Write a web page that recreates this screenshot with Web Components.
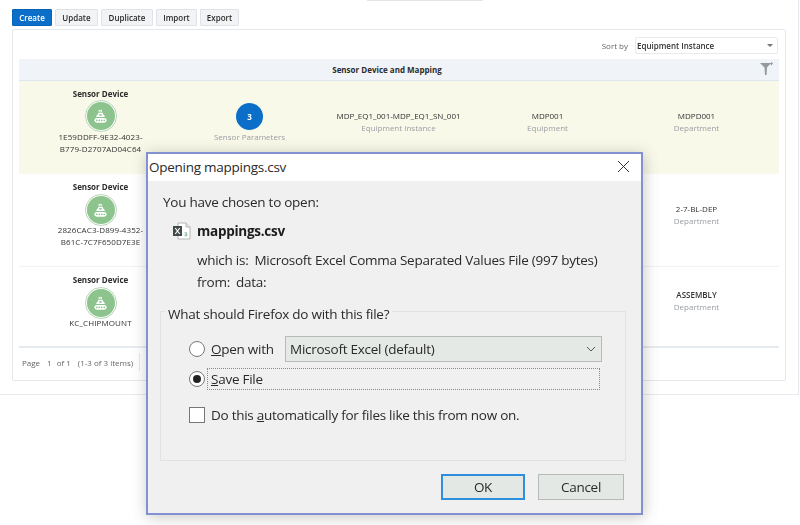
<!DOCTYPE html>
<html>
<head>
<meta charset="utf-8">
<title>Sensor Device and Mapping</title>
<style>
  html, body { margin: 0; background: #fff; }
  body { width: 800px; height: 525px; overflow: hidden; position: relative; font-family: "Open Sans", "Liberation Sans", sans-serif; }
</style>
</head>
<body>
<page-shell>
  <tool-bar>
    <tool-button primary style="width:40px">Create</tool-button>
    <tool-button style="width:43px">Update</tool-button>
    <tool-button style="width:52px">Duplicate</tool-button>
    <tool-button style="width:41px">Import</tool-button>
    <tool-button style="width:39px">Export</tool-button>
  </tool-bar>
  <list-panel>
    <sensor-row selected style="height:93px;padding-top:8px">
      <device-cell>1E59DDFF-9E32-4023-<br>B779-D2707AD04C64</device-cell>
      <count-cell count="3" label="Sensor Parameters"></count-cell>
      <info-cell label="Equipment Instance">MDP_EQ1_001-MDP_EQ1_SN_001</info-cell>
      <info-cell label="Equipment">MDP001</info-cell>
      <info-cell label="Department">MDPD001</info-cell>
    </sensor-row>
    <sensor-row style="height:92px;padding-top:7px;border-bottom:1px solid #f0f2f4;--ring-top:2px;--ring-bottom:-2px">
      <device-cell>2826CAC3-D899-4352-<br>B61C-7C7F650D7E3E</device-cell>
      <info-cell style="grid-column:5" label="Department">2-7-BL-DEP</info-cell>
    </sensor-row>
    <sensor-row style="height:81px;padding-top:8px;border-bottom:2px solid #e6ebf0;--ring-top:2px;--ring-bottom:-2px;--info-top:14px">
      <device-cell>KC_CHIPMOUNT</device-cell>
      <info-cell style="grid-column:5;font-weight:600" label="Department">ASSEMBLY</info-cell>
    </sensor-row>
    <pager-bar></pager-bar>
  </list-panel>
</page-shell>

<download-dialog file="mappings.csv"></download-dialog>

<script>
const bgFont = '"Open Sans", "Liberation Sans", sans-serif';
const dlgFont = '"Open Sans", "Noto Sans", "Liberation Sans", sans-serif';

class PageShell extends HTMLElement {
  constructor() {
    super();
    this.attachShadow({ mode: 'open' }).innerHTML = `
      <style>
        :host { display: block; width: 799px; height: 395px; box-sizing: border-box; border-right: 1px solid #e6e9ee; border-bottom: 1px solid #e6e9ee; font-family: ${bgFont}; filter: blur(.3px); }
        .strip { height: 1px; width: 116px; margin-left: 367px; background: #e4e4e4; }
        .inner { padding: 8px 0 0 12px; }
      </style>
      <div class="strip"></div>
      <div class="inner"><slot></slot></div>`;
  }
}

class ToolBar extends HTMLElement {
  constructor() {
    super();
    this.attachShadow({ mode: 'open' }).innerHTML = `
      <style>:host { display: flex; gap: 3px; height: 17px; margin-bottom: 3px; }</style>
      <slot></slot>`;
  }
}

class ToolButton extends HTMLElement {
  constructor() {
    super();
    this.attachShadow({ mode: 'open' }).innerHTML = `
      <style>
        :host { display: flex; align-items: center; justify-content: center; box-sizing: border-box; height: 17px; font-size: 8px; font-weight: 600; color: #2c2c2c; background: #f1f3f5; border: 1px solid #dfe3e7; border-radius: 1px; }
        :host([primary]) { background: #0b6fc9; border-color: #0a64b5; color: #fff; }
      </style>
      <slot></slot>`;
  }
}

class ListPanel extends HTMLElement {
  constructor() {
    super();
    this.attachShadow({ mode: 'open' }).innerHTML = `
      <style>
        :host { display: block; box-sizing: border-box; width: 774px; height: 352px; padding: 7px 6px 0; border: 1px solid #e4e8ec; border-radius: 2px; background: #fff; }
        .sort { display: flex; justify-content: flex-end; align-items: center; gap: 7px; height: 17px; margin: 0 1px 5px 0; font-size: 8px; color: #666; }
        .select { display: flex; align-items: center; justify-content: space-between; box-sizing: border-box; width: 143px; height: 17px; padding: 0 4px 0 1px; border: 1px solid #e8ebee; border-radius: 2px; color: #333; font-weight: 600; }
        .caret { width: 0; height: 0; border: 3px solid transparent; border-top: 3px solid #777; border-bottom: 0; }
        .head { position: relative; display: flex; align-items: center; justify-content: center; height: 22px; padding-right: 24px; background: #f0f4f8; border-bottom: 1px solid #dce6ec; box-sizing: border-box; font-size: 8px; font-weight: 700; color: #2c2c2c; }
        .head svg { position: absolute; right: 5px; top: 2px; }
      </style>
      <div class="sort">Sort by <div class="select">Equipment Instance<span class="caret"></span></div></div>
      <div class="head">Sensor Device and Mapping
        <svg width="15" height="15" viewBox="0 0 15 15"><path d="M1 2h11L8 6.5 7.6 14H6L5.5 6.5z" fill="#94999d"/><path d="M12.5 1.2v3M11 2.7h3" stroke="#94999d" stroke-width="1"/></svg>
      </div>
      <slot></slot>`;
  }
}

class SensorRow extends HTMLElement {
  constructor() {
    super();
    this.attachShadow({ mode: 'open' }).innerHTML = `
      <style>
        :host { display: grid; grid-template-columns: repeat(5, 149px); padding: 0 7px; box-sizing: border-box; align-items: stretch; font-size: 8px; }
        :host([selected]) { background: #f9f9ea; margin-bottom: 1px; }
      </style>
      <slot></slot>`;
  }
}

class DeviceCell extends HTMLElement {
  constructor() {
    super();
    this.attachShadow({ mode: 'open' }).innerHTML = `
      <style>
        :host { display: flex; flex-direction: column; align-items: center; text-align: center; color: #333; line-height: 12px; }
        .t { font-weight: 700; color: #2c2c2c; height: 10px; line-height: 10px; }
        .ring { flex: none; width: 32px; height: 32px; margin: var(--ring-top, 1px) 0 var(--ring-bottom, -1px); box-sizing: border-box; border: 1px solid #b9d4b9; border-radius: 50%; padding: 1px; background: #fff; }
        .disc { display: flex; align-items: center; justify-content: center; height: 100%; border-radius: 50%; background: #8dc48e; }
        .id { letter-spacing: .1px; }
      </style>
      <div class="t">Sensor Device</div>
      <div class="ring"><div class="disc">
        <svg width="15" height="15" viewBox="0 0 16 16">
          <path d="M7.2 1v2M5.5 2h4l-1.2-1.1M9.5 2l-1.2 1.1" stroke="#fff" stroke-width=".9" fill="none"/>
          <path d="M5.5 4h5v1.6c1.2.4 1.9 1.4 2.1 3H3.4c.2-1.6.9-2.6 2.1-3z" fill="#fff"/>
          <rect x="6.8" y="5.4" width="2.4" height="1.8" fill="#8dc48e"/>
          <rect x="1.5" y="9.6" width="13" height="5" rx="2.5" fill="#fff"/>
          <g fill="#8dc48e"><circle cx="4" cy="12.1" r=".9"/><circle cx="6.7" cy="12.1" r=".9"/><circle cx="9.3" cy="12.1" r=".9"/><circle cx="12" cy="12.1" r=".9"/></g>
        </svg>
      </div></div>
      <div class="id"><slot></slot></div>`;
  }
}

class CountCell extends HTMLElement {
  constructor() {
    super();
    this.attachShadow({ mode: 'open' }).innerHTML = `
      <style>
        :host { display: flex; flex-direction: column; align-items: center; padding-top: 14px; color: #9a9ea2; }
        .n { display: flex; align-items: center; justify-content: center; width: 27px; height: 27px; margin-bottom: 1px; border-radius: 50%; background: #0b6fc9; color: #fff; font-weight: 700; }
      </style>
      <div class="n">${this.getAttribute('count')}</div>
      <div>${this.getAttribute('label')}</div>`;
  }
}

class InfoCell extends HTMLElement {
  constructor() {
    super();
    this.attachShadow({ mode: 'open' }).innerHTML = `
      <style>
        :host { display: flex; flex-direction: column; align-items: center; padding-top: var(--info-top, 21px); line-height: 12px; color: #333; text-align: center; }
        .l { color: #9a9ea2; font-weight: 400; }
      </style>
      <div><slot></slot></div>
      <div class="l">${this.getAttribute('label')}</div>`;
  }
}

class PagerBar extends HTMLElement {
  constructor() {
    super();
    this.attachShadow({ mode: 'open' }).innerHTML = `
      <style>
        :host { display: flex; align-items: center; height: 18px; margin-top: 5px; padding-left: 3px; font-size: 8px; color: #666; }
        span { margin-right: 7px; }
        .n { margin-right: 5px; }
        .last { margin-right: 5px; }
        .sep { width: 1px; height: 18px; margin-left: 1px; background: #e4e8ec; }
      </style>
      <span>Page</span><span class="n">1</span><span>of 1</span><span class="last">(1-3 of 3 items)</span><div class="sep"></div>`;
  }
}

class DownloadDialog extends HTMLElement {
  constructor() {
    super();
    const file = this.getAttribute('file');
    this.attachShadow({ mode: 'open' }).innerHTML = `
      <style>
        :host { position: absolute; left: 146px; top: 152px; width: 497px; height: 363px; box-sizing: border-box; display: flex; flex-direction: column; border: 2px solid #8391d2; background: #f0f0f0; box-shadow: 1px 2px 14px rgba(70,70,60,.3); font-family: ${dlgFont}; font-size: 13.5px; letter-spacing: -.26px; color: #2a2a2a; }
        .title { display: flex; align-items: center; justify-content: space-between; height: 27px; flex: none; box-sizing: border-box; padding: 0 11px 2px 1px; background: #fff; }
        .body { flex: 1; padding: 10px 14px 0 15px; }
        .line { height: 22px; line-height: 22px; white-space: nowrap; }
        .file { display: flex; align-items: center; gap: 6px; margin: 7px 0 7px 10px; height: 22px; font-weight: 700; color: #1c1c1c; }
        .meta { display: flex; gap: 6px; margin-left: 34px; }
        fieldset { margin: 5px 0 0 -3px; padding: 12px 23px 0 0; height: 163px; width: 466px; box-sizing: border-box; border: 1px solid #dfe3e3; }
        legend { padding: 6px 3px 0; margin-left: 4px; line-height: 20px; }
        .opts { display: grid; grid-template-columns: 16px 68px 1fr; column-gap: 6px; align-items: center; margin-left: 28px; }
        .radio { width: 16px; height: 16px; box-sizing: border-box; border: 1px solid #777; border-radius: 50%; background: #fff; display: flex; align-items: center; justify-content: center; }
        .radio.on::after { content: ""; width: 8px; height: 8px; border-radius: 50%; background: #222; }
        .combo { display: flex; align-items: center; justify-content: space-between; height: 26px; padding: 0 5px 0 4px; box-sizing: border-box; background: #e5e9e5; border: 1px solid #b8bab8; }
        .saved { grid-column: 2 / 4; margin: 6px 2px 0 -4px; height: 22px; line-height: 20px; padding-left: 3px; box-sizing: border-box; border: 1px dotted #8a8a8a; }
        .check { display: flex; align-items: center; gap: 6px; margin: 16px 0 0 28px; }
        .box { width: 16px; height: 16px; box-sizing: border-box; border: 1px solid #777; background: #fff; flex: none; }
        .foot { display: flex; justify-content: flex-end; gap: 13px; margin: 13px 3px 0 0; }
        .btn { display: flex; align-items: center; justify-content: center; height: 26px; width: 86px; box-sizing: border-box; background: #e4e8e4; border: 1px solid #b8bab8; }
        .btn.def { width: 84px; border: 2px solid #2f8fdc; }
      </style>
      <div class="title">Opening ${file}
        <svg width="13" height="13" viewBox="0 0 13 13"><path d="M1 1l11 11M12 1L1 12" stroke="#333" stroke-width="1" fill="none"/></svg>
      </div>
      <div class="body">
        <div class="line">You have chosen to open:</div>
        <div class="file">
          <svg width="18" height="18" viewBox="0 0 18 18">
            <path d="M5 1h8l4 4v12H5z" fill="#fff" stroke="#b5b8b5"/>
            <path d="M13 1v4h4" fill="#e8e8e8" stroke="#b5b8b5"/>
            <rect x="0" y="4" width="9" height="10" fill="#3f4a4a"/>
            <path d="M2.2 6l4.6 6M6.8 6l-4.6 6" stroke="#fff" stroke-width="1.2"/>
            <path d="M13.7 14v-3.2h-2.2M13.7 12.4h-1.4a1 1 0 0 0 0 1.6h1.4" fill="none" stroke="#8fb89a" stroke-width="1"/>
          </svg>
          <span>${file}</span>
        </div>
        <div class="line meta"><span>which is:</span><span>Microsoft Excel Comma Separated Values File (997 bytes)</span></div>
        <div class="line meta"><span>from:</span><span>data:</span></div>
        <fieldset>
          <legend>What should Firefox do with this file?</legend>
          <div class="opts">
            <div class="radio"></div><div><u>O</u>pen with</div>
            <div class="combo">Microsoft Excel (default)
              <svg width="10" height="6" viewBox="0 0 10 6"><path d="M1 1l4 4 4-4" stroke="#555" fill="none"/></svg>
            </div>
            <div class="radio on" style="margin-top:6px"></div><div class="saved"><u>S</u>ave File</div>
          </div>
          <div class="check"><div class="box"></div><div>Do this <u>a</u>utomatically for files like this from now on.</div></div>
        </fieldset>
        <div class="foot"><div class="btn def">OK</div><div class="btn">Cancel</div></div>
      </div>`;
  }
}

customElements.define('page-shell', PageShell);
customElements.define('tool-bar', ToolBar);
customElements.define('tool-button', ToolButton);
customElements.define('list-panel', ListPanel);
customElements.define('sensor-row', SensorRow);
customElements.define('device-cell', DeviceCell);
customElements.define('count-cell', CountCell);
customElements.define('info-cell', InfoCell);
customElements.define('pager-bar', PagerBar);
customElements.define('download-dialog', DownloadDialog);
</script>
</body>
</html>
